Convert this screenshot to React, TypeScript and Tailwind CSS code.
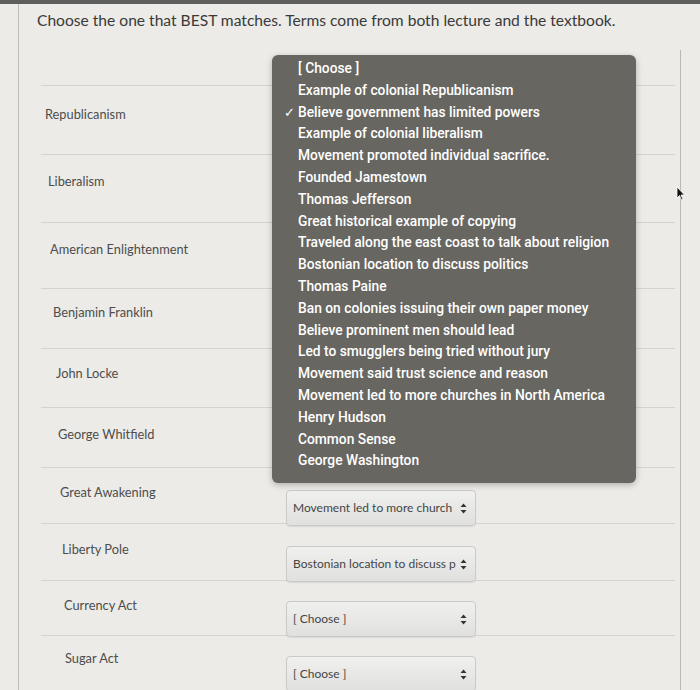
import React from 'react';

const rows = [
  { label: 'Republicanism', h: 'h-[69px]', pl: 'pl-[4px]', pt: 'pt-[20px]' },
  { label: 'Liberalism', h: 'h-[68px]', pl: 'pl-[7px]', pt: 'pt-[18px]' },
  { label: 'American Enlightenment', h: 'h-[66px]', pl: 'pl-[9px]', pt: 'pt-[18px]' },
  { label: 'Benjamin Franklin', h: 'h-[60px]', pl: 'pl-[12px]', pt: 'pt-[15px]' },
  { label: 'John Locke', h: 'h-[59px]', pl: 'pl-[15px]', pt: 'pt-[16px]' },
  { label: 'George Whitfield', h: 'h-[60px]', pl: 'pl-[17px]', pt: 'pt-[18px]' },
  { label: 'Great Awakening', h: 'h-[56px]', pl: 'pl-[19px]', pt: 'pt-[16px]', value: 'Movement led to more church', selTop: 'mt-[22px]' },
  { label: 'Liberty Pole', h: 'h-[57px]', pl: 'pl-[21px]', pt: 'pt-[17px]', value: 'Bostonian location to discuss p', selTop: 'mt-[22px]' },
  { label: 'Currency Act', h: 'h-[55px]', pl: 'pl-[23px]', pt: 'pt-[16px]', value: '[ Choose ]', selTop: 'mt-[20px]' },
  { label: 'Sugar Act', h: 'h-[55px]', pl: 'pl-[24px]', pt: 'pt-[14px]', value: '[ Choose ]', selTop: 'mt-[20px]' },
];

const options = [
  '[ Choose ]',
  'Example of colonial Republicanism',
  'Believe government has limited powers',
  'Example of colonial liberalism',
  'Movement promoted individual sacrifice.',
  'Founded Jamestown',
  'Thomas Jefferson',
  'Great historical example of copying',
  'Traveled along the east coast to talk about religion',
  'Bostonian location to discuss politics',
  'Thomas Paine',
  'Ban on colonies issuing their own paper money',
  'Believe prominent men should lead',
  'Led to smugglers being tried without jury',
  'Movement said trust science and reason',
  'Movement led to more churches in North America',
  'Henry Hudson',
  'Common Sense',
  'George Washington',
];

const Arrows = () => (
  <svg width="7" height="11" viewBox="0 0 7 11" className="shrink-0">
    <path d="M3.5 0.5 L6.5 4 L0.5 4 Z" fill="#333" />
    <path d="M3.5 10.5 L6.5 7 L0.5 7 Z" fill="#333" />
  </svg>
);

const SelectBox = ({ value, top }: { value: string; top: string }) => (
  <div
    className={`${top} w-[190px] h-[36px] flex items-center justify-between pl-[6px] pr-[8px] rounded-[4px] border border-[#cbcac6] bg-gradient-to-b from-[#f0f0ee] to-[#e0e0de] shadow-[0_1px_1px_rgba(0,0,0,0.08)]`}
  >
    <span className="text-[12px] text-[#454545] whitespace-nowrap">{value}</span>
    <Arrows />
  </div>
);

const App: React.FC = () => {
  return (
    <div className="relative w-[700px] h-[690px] overflow-hidden bg-[#ecebe7] font-['Lato','Open_Sans',sans-serif]">
      <div className="h-[4px] bg-[#5e5e5c]" />

      <div className="ml-[18px] mr-[19px] border-l border-[#bdbcb8]">
        <h1 className="pl-[18px] pt-[6px] text-[15.6px] text-[#3a3a3a] leading-[20px]">
          Choose the one that BEST matches. Terms come from both lecture and the textbook.
        </h1>

        <div className="mt-[55px] ml-[22px] mr-[6px]">
          {rows.map((r) => (
            <div key={r.label} className={`flex ${r.h} border-t border-[#d4d3cf]`}>
              <div className={`${r.pl} ${r.pt} w-[245px] shrink-0 text-[12.8px] leading-[16px] text-[#4d4d4d]`}>
                {r.label}
              </div>
              {r.value && <SelectBox value={r.value} top={r.selTop!} />}
            </div>
          ))}
        </div>
      </div>

      {/* right edge of the content panel */}
      <div className="absolute left-[680px] top-[50px] bottom-0 w-px bg-[#b9b8b4]" />

      {/* open dropdown */}
      <div className="absolute left-[272px] top-[55px] w-[364px] h-[428px] rounded-[6px] bg-[#676661] shadow-[0_2px_6px_rgba(0,0,0,0.25)] pt-[3px] font-['Roboto','Noto_Sans',sans-serif]">
        {options.map((o, i) => (
          <div key={o} className="flex pl-[12px] text-[13.8px] font-medium leading-[21.8px] text-white whitespace-nowrap">
            <span className="w-[14px] text-[13px]">{i === 2 ? '✓' : ''}</span>
            {o}
          </div>
        ))}
      </div>

      {/* mouse cursor */}
      <svg className="absolute left-[676px] top-[186px]" width="10" height="15" viewBox="0 0 10 15">
        <path d="M1 1 L1 12 L3.5 9.5 L5.5 14 L7 13.3 L5 9 L8.5 9 Z" fill="#111" stroke="#fff" strokeWidth="0.8" />
      </svg>
    </div>
  );
};

export default App;
